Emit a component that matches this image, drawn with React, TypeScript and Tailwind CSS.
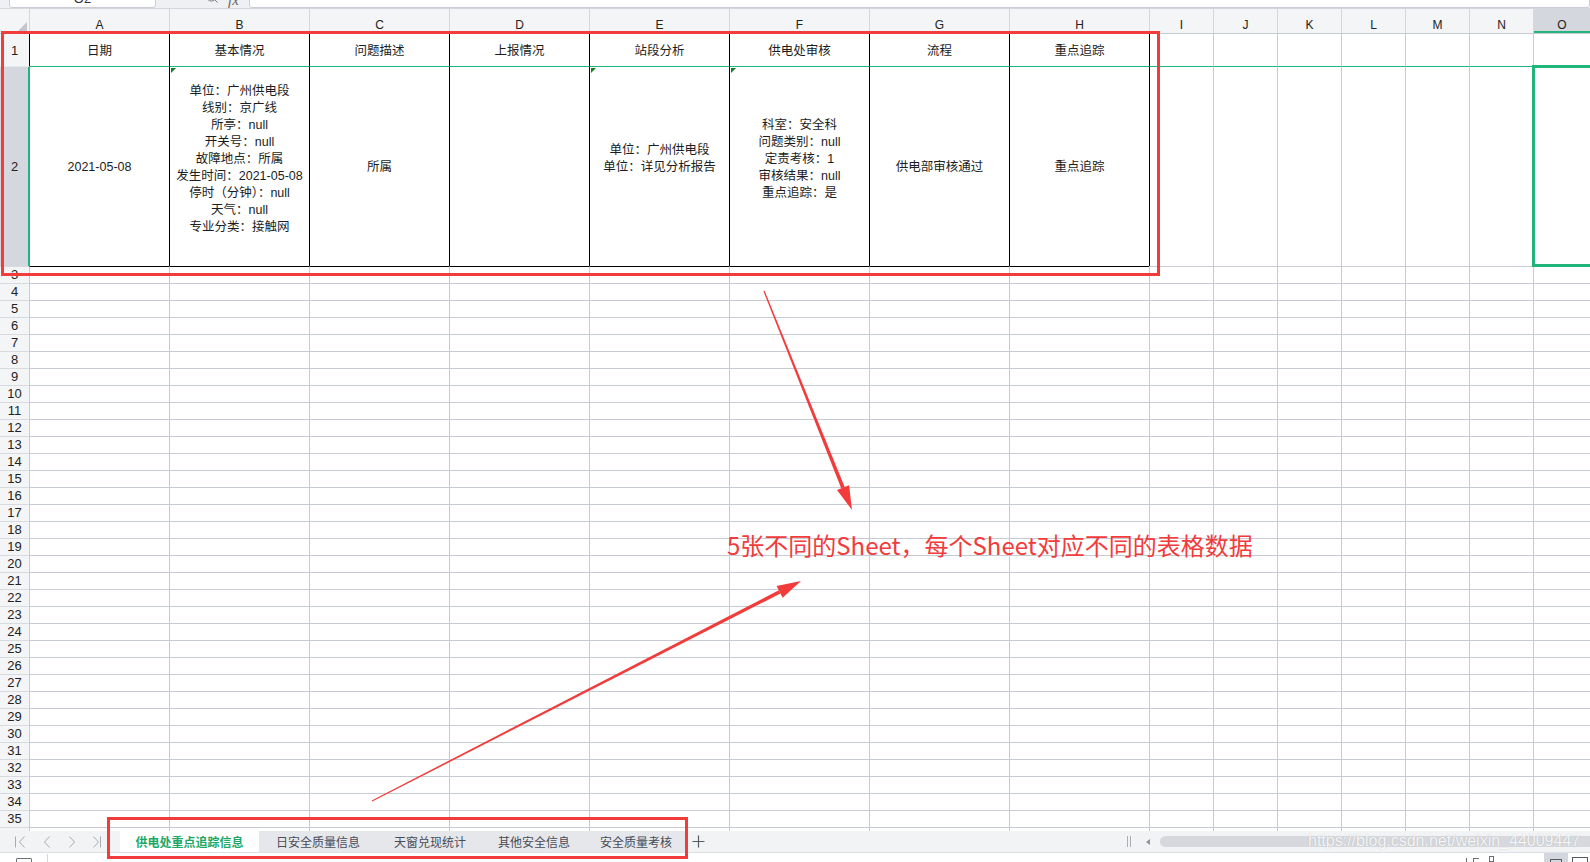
import React from "react";
import { Search } from "lucide-react";

const COLS = ["A", "B", "C", "D", "E", "F", "G", "H", "I", "J", "K", "L", "M", "N", "O"];
const GRID = "grid grid-cols-[29px_repeat(8,140px)_repeat(6,64px)_1fr]";

function Tri() {
  return (
    <span className="absolute left-[1px] top-[1px] w-0 h-0 border-t-[5px] border-t-[#13801f] border-r-[5px] border-r-transparent" />
  );
}

type CellProps = { lines?: string[]; tri?: boolean; multi?: boolean };

const row2: CellProps[] = [
  { lines: ["2021-05-08"] },
  {
    lines: [
      "单位：广州供电段",
      "线别：京广线",
      "所亭：null",
      "开关号：null",
      "故障地点：所属",
      "发生时间：2021-05-08",
      "停时（分钟）：null",
      "天气：null",
      "专业分类：接触网",
    ],
    tri: true,
    multi: true,
  },
  { lines: ["所属"] },
  { lines: [] },
  { lines: ["单位：广州供电段", "单位：详见分析报告"], tri: true, multi: true },
  {
    lines: ["科室：安全科", "问题类别：null", "定责考核：1", "审核结果：null", "重点追踪：是"],
    tri: true,
    multi: true,
  },
  { lines: ["供电部审核通过"] },
  { lines: ["重点追踪"] },
];

const row1 = ["日期", "基本情况", "问题描述", "上报情况", "站段分析", "供电处审核", "流程", "重点追踪"];

const tabs = [
  { t: "日安全质量信息", cls: "pl-[17px] pr-[17px]" },
  { t: "天窗兑现统计", cls: "pl-[17px] pr-[17px]" },
  { t: "其他安全信息", cls: "pl-[15px] pr-[15px]" },
  { t: "安全质量考核", cls: "pl-[15px] pr-[15px]" },
];

function NavArrows() {
  return (
    <div className="w-[120px] shrink-0 relative flex items-center">
      <svg width="120" height="21" viewBox="0 0 120 21" className="block">
        <g fill="none" stroke="#a8acb4" strokeWidth="1">
          <path d="M15.5 5.5 V16.5" />
          <path d="M24.5 5.5 L19.5 11 L24.5 16.5" />
          <path d="M49.5 5.5 L44.5 11 L49.5 16.5" />
          <path d="M69.5 5.5 L74.5 11 L69.5 16.5" />
          <path d="M93.5 5.5 L98.5 11 L93.5 16.5" />
          <path d="M100.5 5.5 V16.5" />
        </g>
      </svg>
    </div>
  );
}

export default function App() {
  const rowsRest = Array.from({ length: 33 }, (_, i) => i + 3);
  return (
    <div className="w-[1590px] h-[862px] overflow-hidden relative bg-white font-['Liberation_Sans','Noto_Sans_CJK_SC',sans-serif] text-[#1b1d22]">
      {/* formula bar (cut off) */}
      <div className="h-[8px] bg-[#eff0f3] flex items-end overflow-hidden">
        <div className="ml-[9px] w-[147px] h-[28px] shrink-0 bg-white border border-[#c9ccd3] rounded-[3px] flex items-end justify-center text-[13px] leading-[15px] text-[#333] pb-[1px]">
          O2
        </div>
        <div className="ml-[49px] shrink-0 mb-[4px] text-[#666]">
          <Search size={14} strokeWidth={1.5} />
        </div>
        <div className="ml-[9px] shrink-0 mb-[0px] text-[15px] italic leading-[15px] text-[#666] font-['Liberation_Serif',serif]">
          fx
        </div>
        <div className="ml-[10px] flex-1 h-[28px] bg-white border border-[#c9ccd3] rounded-[3px]" />
      </div>

      {/* column header */}
      <div className={`${GRID} h-[25px]`}>
        <div className="relative bg-[#f4f5f7] border-t border-[#d7dadf]">
          <span className="absolute left-[18px] top-[13px] w-0 h-0 border-b-[9px] border-b-[#c3c6cc] border-l-[9px] border-l-transparent" />
        </div>
        {COLS.map((c) => (
          <div
            key={c}
            className={`border-l border-t border-[#d3d6dc] flex items-end justify-center pb-[1px] text-[12px] leading-[14px] text-[#222] ${
              c === "O" ? "bg-[#d4d7dd] shadow-[inset_0_-2px_0_#21b57b]" : "bg-[#f4f5f7]"
            }`}
          >
            {c}
          </div>
        ))}
      </div>

      {/* row 1 */}
      <div className={`${GRID} h-[33px]`}>
        <div className="bg-[#f4f5f7] border-t border-[#c6cad4] flex items-center justify-center pt-[1px] text-[13px] text-[#222]">1</div>
        {row1.map((t, i) => (
          <div
            key={i}
            className="border-l border-t border-black flex items-center justify-center pt-[2px] text-[12.5px] leading-[17px]"
          >
            {t}
          </div>
        ))}
        {COLS.slice(8).map((c, i) => (
          <div
            key={c}
            className={`border-t border-t-[#c6cad4] ${i === 0 ? "border-l border-l-black" : "border-l border-l-[#c6cad4]"}`}
          />
        ))}
      </div>

      {/* row 2 */}
      <div className={`${GRID} h-[200px]`}>
        <div className="bg-[#d4d7dd] border-t border-[#e6e8ec] shadow-[inset_-1px_0_0_#21b57b] flex items-center justify-center pt-[1px] text-[13px] text-[#222]">
          2
        </div>
        {row2.map((cell, i) => (
          <div
            key={i}
            className={`relative border-l border-t border-t-[#21b57b] ${
              i === 0 ? "border-l-[#21b57b]" : "border-l-black"
            } flex flex-col items-center justify-center pt-[2px] text-center text-[12.5px] leading-[17px]`}
          >
            {cell.tri && <Tri />}
            {cell.lines?.map((l, k) => (
              <div key={k} className="whitespace-nowrap">
                {l}
              </div>
            ))}
            {cell.multi && <div className="h-[17px]" />}
          </div>
        ))}
        {COLS.slice(8).map((c, i) => (
          <div
            key={c}
            className={`border-t border-t-[#21b57b] border-l ${i === 0 ? "border-l-black" : "border-l-[#c6cad4]"}`}
          />
        ))}
      </div>

      {/* rows 3 - 35 */}
      {rowsRest.map((n) => (
        <div key={n} className={`${GRID} h-[17px]`}>
          <div className="bg-[#f4f5f7] border-t border-[#d7dadf] flex items-center justify-center text-[13px] leading-[16px] text-[#222]">
            {n}
          </div>
          {COLS.map((c, i) => (
            <div
              key={c}
              className={`border-l border-l-[#c6cad4] border-t ${
                n === 3 && i < 8 ? "border-t-black" : "border-t-[#c6cad4]"
              }`}
            />
          ))}
        </div>
      ))}
      {/* partial row 36 */}
      <div className={`${GRID} h-[4px]`}>
        <div className="bg-[#f4f5f7] border-t border-[#d7dadf]" />
        {COLS.map((c) => (
          <div key={c} className="border-l border-t border-[#c6cad4]" />
        ))}
      </div>

      {/* sheet tabs bar */}
      <div className="h-[21px] bg-[#f2f3f5] flex items-stretch">
        <NavArrows />
        <div className="w-[139px] shrink-0 bg-white flex items-center justify-center text-[12px] font-bold text-[#1ca866] font-['Noto_Sans_CJK_SC',sans-serif]">
          供电处重点追踪信息
        </div>
        {tabs.map(({ t, cls }) => (
          <div
            key={t}
            className={`${cls} shrink-0 bg-[#e6e7eb] flex items-center text-[12px] text-[#474c57] font-['Noto_Sans_CJK_SC',sans-serif]`}
          >
            {t}
          </div>
        ))}
        <div className="ml-[5px] shrink-0 flex items-center">
          <svg width="13" height="13" viewBox="0 0 13 13">
            <path d="M6.5 0.5 V12.5 M0.5 6.5 H12.5" stroke="#555a63" strokeWidth="1.2" fill="none" />
          </svg>
        </div>
        <div className="flex-1" />
        <div className="shrink-0 flex items-center gap-[2px] mr-[15px]">
          <span className="w-px h-[11px] bg-[#a9adb5]" />
          <span className="w-px h-[11px] bg-[#a9adb5]" />
        </div>
        <div className="shrink-0 flex items-center mr-[4px]">
          <span className="w-0 h-0 border-y-[3.5px] border-y-transparent border-r-[4px] border-r-[#8e939c]" />
        </div>
        <div className="w-[436px] shrink-0 flex items-center pl-[6px]">
          <div className="w-full h-[11px] rounded-l-full bg-[#d6d8dd]" />
        </div>
      </div>

      {/* status bar */}
      <div className="h-[10px] bg-white border-t border-[#dcdfe4] flex items-start">
        <div className="ml-[16px] mt-[5px] w-[16px] h-[8px] border border-[#6b7078] rounded-[1px]" />
        <div className="ml-[15px] mt-[1px] w-px h-[9px] bg-[#d5d8de]" />
        <div className="flex-1" />
        <div className="mt-[5px] mr-[10px] flex gap-[6px]">
          <span className="w-px h-[5px] bg-[#6b7078]" />
          <span className="w-[6px] h-[5px] border-l border-t border-[#6b7078]" />
        </div>
        <div className="mr-[50px] mt-[3px] w-[5px] h-[6px] border border-[#6b7078]" />
        <div className="w-[24px] h-[9px] bg-[#d4d7dd] flex items-end justify-center">
          <span className="w-[12px] h-[3px] border-t border-x border-[#555a63]" />
        </div>
        <div className="ml-[4px] mr-[2px] mt-[4px] w-[16px] h-[6px] border-t border-x border-[#555a63]" />
      </div>

      {/* ---------- overlays ---------- */}
      {/* selection O2 */}
      <div className="absolute left-[1532px] top-[65px] w-[80px] h-[202px] border-[3px] border-[#21b57b]" />

      {/* watermark */}
      <div className="absolute left-[1308px] top-[831px] text-[16px] leading-[20px] text-white/90 [text-shadow:0_0_1px_rgba(0,0,0,0.25)] whitespace-nowrap">
        https://blog.csdn.net/weixin_44009447
      </div>

      {/* red annotation boxes */}
      <div className="absolute left-[1px] top-[31px] w-[1159px] h-[245px] border-[3px] border-[#f23b3b]" />
      <div className="absolute left-[107px] top-[817px] w-[581px] h-[42px] border-[3px] border-[#f23b3b]" />

      {/* arrows */}
      <svg className="absolute left-0 top-0 pointer-events-none" width="1590" height="862" viewBox="0 0 1590 862">
        <g fill="#f23b3b">
          <polygon points="763.4,291.2 764.6,290.8 844.7,487.0 841.3,488.4" />
          <polygon points="852,510 837.0,490.1 849.1,485.3" />
          <polygon points="372.27,801.53 371.73,800.47 778.8,590.3 780.4,593.5" />
          <polygon points="801,581 782.6,597.7 776.6,586.1" />
        </g>
      </svg>

      {/* red annotation text */}
      <div className="absolute left-[727px] top-[532px] text-[24px] leading-[26px] text-[#f23b3b] whitespace-nowrap font-['Noto_Sans_CJK_SC',sans-serif]">
        5张不同的Sheet，每个Sheet对应不同的表格数据
      </div>
    </div>
  );
}
